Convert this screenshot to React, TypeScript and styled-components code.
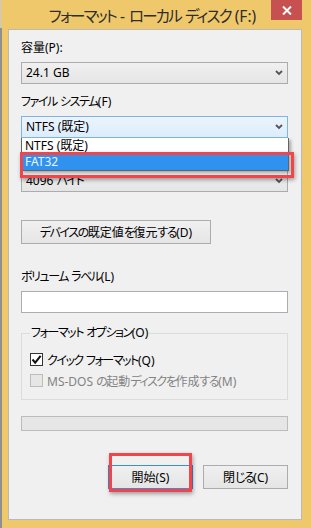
import styled, { createGlobalStyle } from "styled-components";

const GlobalStyle = createGlobalStyle`
  html, body {
    margin: 0;
    padding: 0;
    background: #f0c86c;
  }
  body {
    font-family: "Noto Sans", "Noto Sans CJK JP", sans-serif;
    font-feature-settings: "palt";
    color: #000;
  }
`;

// Meiryo UI kana are much narrower than Noto's, so kana runs are tightened
const kanaRe = /([\u3040-\u30ff]+)/;

const JP = ({ text }: { text: string }) => (
  <>
    {text.split(kanaRe).map((s, i) => (i % 2 ? <Kana key={i}>{s}</Kana> : s))}
  </>
);

type Option = { label: string; selected?: boolean };

const fileSystems: Option[] = [
  { label: "NTFS (既定)" },
  { label: "FAT32", selected: true },
];

const Chevron = () => (
  <svg width="8" height="6" viewBox="0 0 8 6">
    <path d="M1 1 L4 4 L7 1" fill="none" stroke="#555" strokeWidth="1.8" />
  </svg>
);

const Check = () => (
  <svg width="11" height="11" viewBox="0 0 11 11">
    <path
      d="M1.5 5.5 L4.2 8.6 L9.6 1.8"
      fill="none"
      stroke="#111"
      strokeWidth="2"
    />
  </svg>
);

export default function App() {
  return (
    <>
      <GlobalStyle />
      <Screen>
        <DesktopEdge />
        <Window>
          <TitleBar>
            <Title>
              <JP text="フォーマット - ローカル ディスク (F:)" />
            </Title>
            <CloseButton>
              <svg width="10" height="9" viewBox="0 0 10 9">
                <path d="M1 0.5 L9 8.5 M9 0.5 L1 8.5" stroke="#fff" strokeWidth="2" />
              </svg>
            </CloseButton>
          </TitleBar>

          <Panel>
            <FieldLabel $top={10}>
              <JP text="容量(P):" />
            </FieldLabel>
            <Combo>
              <span>24.1 GB</span>
              <Chevron />
            </Combo>

            <FieldLabel $top={10}>
              <JP text="ファイル システム(F)" />
            </FieldLabel>
            <ComboWrap>
              <Combo $open>
                <span>
                  <JP text="NTFS (既定)" />
                </span>
                <Chevron />
              </Combo>
              <DropList>
                {fileSystems.map((o) => (
                  <DropItem key={o.label} $selected={o.selected}>
                    <JP text={o.label} />
                  </DropItem>
                ))}
              </DropList>
              <Highlight style={{ top: 36, left: -1, width: 274, height: 26 }} />
            </ComboWrap>

            <FieldLabel $top={10} $covered>
              <JP text="アロケーション ユニット サイズ(A)" />
            </FieldLabel>
            <Combo>
              <span>
                <JP text="4096 バイト" />
              </span>
              <Chevron />
            </Combo>

            <PushButton $width={190} $top={28}>
              <JP text="デバイスの既定値を復元する(D)" />
            </PushButton>

            <FieldLabel $top={25}>
              <JP text="ボリューム ラベル(L)" />
            </FieldLabel>
            <TextBox />

            <Group>
              <Legend>
                <JP text="フォーマット オプション(O)" />
              </Legend>
              <CheckRow>
                <CheckBox>
                  <Check />
                </CheckBox>
                <span>
                  <JP text="クイック フォーマット(Q)" />
                </span>
              </CheckRow>
              <CheckRow $disabled>
                <CheckBox $disabled />
                <span>
                  <JP text="MS-DOS の起動ディスクを作成する(M)" />
                </span>
              </CheckRow>
            </Group>

            <Progress />

            <ButtonRow>
              <ButtonWrap>
                <PushButton $width={85} $default>
                  <JP text="開始(S)" />
                </PushButton>
                <Highlight style={{ top: -12, left: 1, width: 83, height: 39 }} />
              </ButtonWrap>
              <PushButton $width={85}>
                <JP text="閉じる(C)" />
              </PushButton>
            </ButtonRow>
          </Panel>
        </Window>
      </Screen>
    </>
  );
}

const Kana = styled.span`
  letter-spacing: -0.12em;
`;

const Screen = styled.div`
  display: flex;
  width: 311px;
  height: 528px;
  overflow: hidden;
`;

const DesktopEdge = styled.div`
  width: 2px;
  background: linear-gradient(#d9c9a0 0 28px, #8f8f8f 28px);
`;

const Window = styled.div`
  flex: 1;
  min-width: 0;
  display: flex;
  flex-direction: column;
  background: #f0c86c;
`;

const TitleBar = styled.div`
  height: 29px;
  display: grid;
  grid-template-columns: 40px 1fr 40px;
  align-items: start;
`;

const Title = styled.div`
  grid-column: 2;
  text-align: center;
  font-size: 15.5px;
  line-height: 32px;
  color: #2d2d2d;
  white-space: nowrap;
  padding-right: 8px;
`;

const CloseButton = styled.div`
  grid-column: 3;
  width: 31px;
  height: 20px;
  background: #c75050;
  display: flex;
  align-items: center;
  justify-content: center;
`;

const Panel = styled.div`
  flex: 1;
  margin: 0 9px 8px 6px;
  border: 1px solid #b9b9b9;
  background: #f0f0f0;
  padding: 0 13px 0 12px;
  display: flex;
  flex-direction: column;
  font-size: 12px;
`;

const FieldLabel = styled.div<{ $top: number; $covered?: boolean }>`
  margin: ${(p) => p.$top}px 0 6px;
  line-height: 16px;
  white-space: nowrap;
  visibility: ${(p) => (p.$covered ? "hidden" : "visible")};
`;

const Combo = styled.div<{ $open?: boolean }>`
  box-sizing: border-box;
  height: 22px;
  display: flex;
  align-items: center;
  justify-content: space-between;
  padding: 0 4px 0 4px;
  border: 1px solid ${(p) => (p.$open ? "#7eb4ea" : "#acacac")};
  background: ${(p) =>
    p.$open
      ? "linear-gradient(#ecf4fc, #dcecfc)"
      : "linear-gradient(#f0f0f0, #e5e5e5)"};
  line-height: 16px;
`;

const ComboWrap = styled.div`
  position: relative;
  z-index: 2;
`;

const DropList = styled.div`
  position: absolute;
  top: 22px;
  left: 0;
  right: -1px;
  box-sizing: border-box;
  background: #fff;
  border: 1px solid #646464;
  border-top: none;
  box-shadow: 2px 2px 3px rgba(0, 0, 0, 0.3);
`;

const DropItem = styled.div<{ $selected?: boolean }>`
  height: 16px;
  line-height: 16px;
  padding-left: 3px;
  background: ${(p) => (p.$selected ? "#3092ef" : "transparent")};
  color: ${(p) => (p.$selected ? "#eef4ff" : "#000")};
`;

const Highlight = styled.div`
  position: absolute;
  box-sizing: border-box;
  border: 3px solid #f2454b;
  box-shadow: 1px 2px 4px rgba(0, 0, 0, 0.35);
  pointer-events: none;
`;

const PushButton = styled.div<{ $width: number; $top?: number; $default?: boolean }>`
  box-sizing: border-box;
  width: ${(p) => p.$width}px;
  height: 24px;
  margin-top: ${(p) => p.$top ?? 0}px;
  align-self: flex-start;
  display: flex;
  align-items: center;
  justify-content: center;
  border: 1px solid ${(p) => (p.$default ? "#3c8cd8" : "#acacac")};
  background: linear-gradient(#f0f0f0, #e5e5e5);
  white-space: nowrap;
`;

const TextBox = styled.div`
  box-sizing: border-box;
  height: 22px;
  background: #fff;
  border: 1px solid #abadb3;
`;

const Group = styled.fieldset`
  margin: 12px 0 0;
  padding: 8px 8px 8px;
  border: 1px solid #dcdcdc;
  min-width: 0;
`;

const Legend = styled.legend`
  padding: 0 1px;
  line-height: 16px;
`;

const CheckRow = styled.div<{ $disabled?: boolean }>`
  display: flex;
  align-items: center;
  gap: 4px;
  height: 21px;
  color: ${(p) => (p.$disabled ? "#838383" : "#000")};
  white-space: nowrap;
`;

const CheckBox = styled.div<{ $disabled?: boolean }>`
  box-sizing: border-box;
  width: 13px;
  height: 13px;
  display: flex;
  align-items: center;
  justify-content: center;
  border: 1px solid ${(p) => (p.$disabled ? "#bcbcbc" : "#333")};
  background: ${(p) => (p.$disabled ? "#e6e6e6" : "#fff")};
`;

const Progress = styled.div`
  box-sizing: border-box;
  height: 15px;
  margin-top: 16px;
  border: 1px solid #bcbcbc;
  background: #e6e6e6;
`;

const ButtonRow = styled.div`
  margin-top: 34px;
  display: flex;
  justify-content: flex-end;
  gap: 10px;
`;

const ButtonWrap = styled.div`
  position: relative;
`;
